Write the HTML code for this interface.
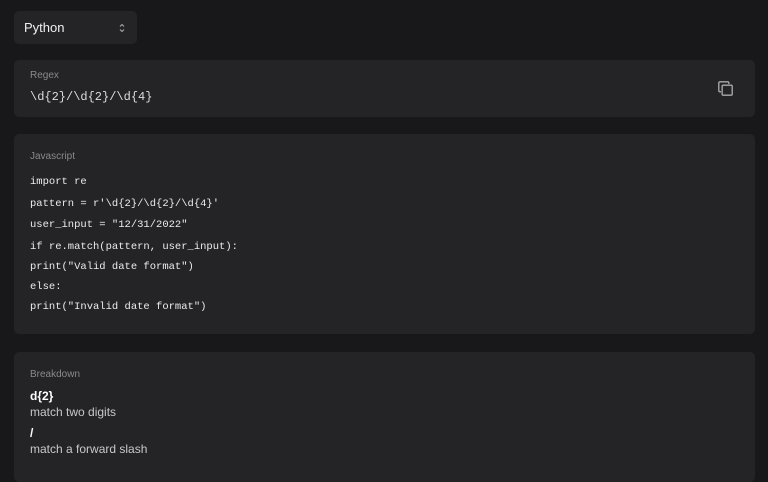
<!DOCTYPE html>
<html><head><style>
body{margin:0;width:768px;height:463px;background:#18181a;font-family:"Liberation Sans",sans-serif;overflow:hidden;position:relative;color:#e6e6e6}
.card{position:absolute;background:#242427;border-radius:5px}
.lbl{position:absolute;font-size:10px;color:#8a8a8e}
.m{font-family:"Liberation Mono",monospace;position:absolute;left:16px;color:#ececec;white-space:pre;font-size:10.5px}
</style></head><body>
<div class="card" style="left:14px;top:11px;width:123px;height:33px">
<div style="position:absolute;left:10px;top:9px;font-size:13px;color:#f0f0f0">Python</div>
<svg style="position:absolute;left:104px;top:11px" width="8" height="12" viewBox="0 0 8 12"><path d="M2 4.5L4 2.5L6 4.5M2 7.5L4 9.5L6 7.5" stroke="#aaa" fill="none" stroke-width="1"/></svg>
</div>
<div class="card" style="left:14px;top:60px;width:741px;height:57px">
<div class="lbl" style="left:16px;top:10px">Regex</div>
<div class="m" style="top:30px;font-size:12px;color:#ddd">\d{2}/\d{2}/\d{4}</div>
<svg style="position:absolute;left:702px;top:19px" width="19" height="19" viewBox="0 0 17 17"><path d="M4.5 11.5H3.5a1 1 0 0 1-1-1V3.5a1 1 0 0 1 1-1h7a1 1 0 0 1 1 1v1" stroke="#aaa" fill="none" stroke-width="1.2"/><rect x="5.5" y="5.5" width="9" height="9" rx="1" stroke="#aaa" fill="none" stroke-width="1.2"/></svg>
</div>
<div class="card" style="left:14px;top:134px;width:741px;height:200px">
<div class="lbl" style="left:16px;top:17px">Javascript</div>
<div class="m" style="top:42px">import re</div>
<div class="m" style="top:64px">pattern = r'\d{2}/\d{2}/\d{4}'</div>
<div class="m" style="top:85px">user_input = "12/31/2022"</div>
<div class="m" style="top:107px">if re.match(pattern, user_input):</div>
<div class="m" style="top:127px">print("Valid date format")</div>
<div class="m" style="top:147px">else:</div>
<div class="m" style="top:167px">print("Invalid date format")</div>
</div>
<div class="card" style="left:14px;top:352px;width:741px;height:130px">
<div class="lbl" style="left:16px;top:17px">Breakdown</div>
<div style="position:absolute;left:16px;top:37px;font-size:12px;font-weight:bold;color:#fff">d{2}</div>
<div style="position:absolute;left:16px;top:53px;font-size:12px;color:#c8c8c8">match two digits</div>
<div style="position:absolute;left:16px;top:74px;font-size:12px;font-weight:bold;color:#fff">/</div>
<div style="position:absolute;left:16px;top:90px;font-size:12px;color:#c8c8c8">match a forward slash</div>
</div>
</body></html>
